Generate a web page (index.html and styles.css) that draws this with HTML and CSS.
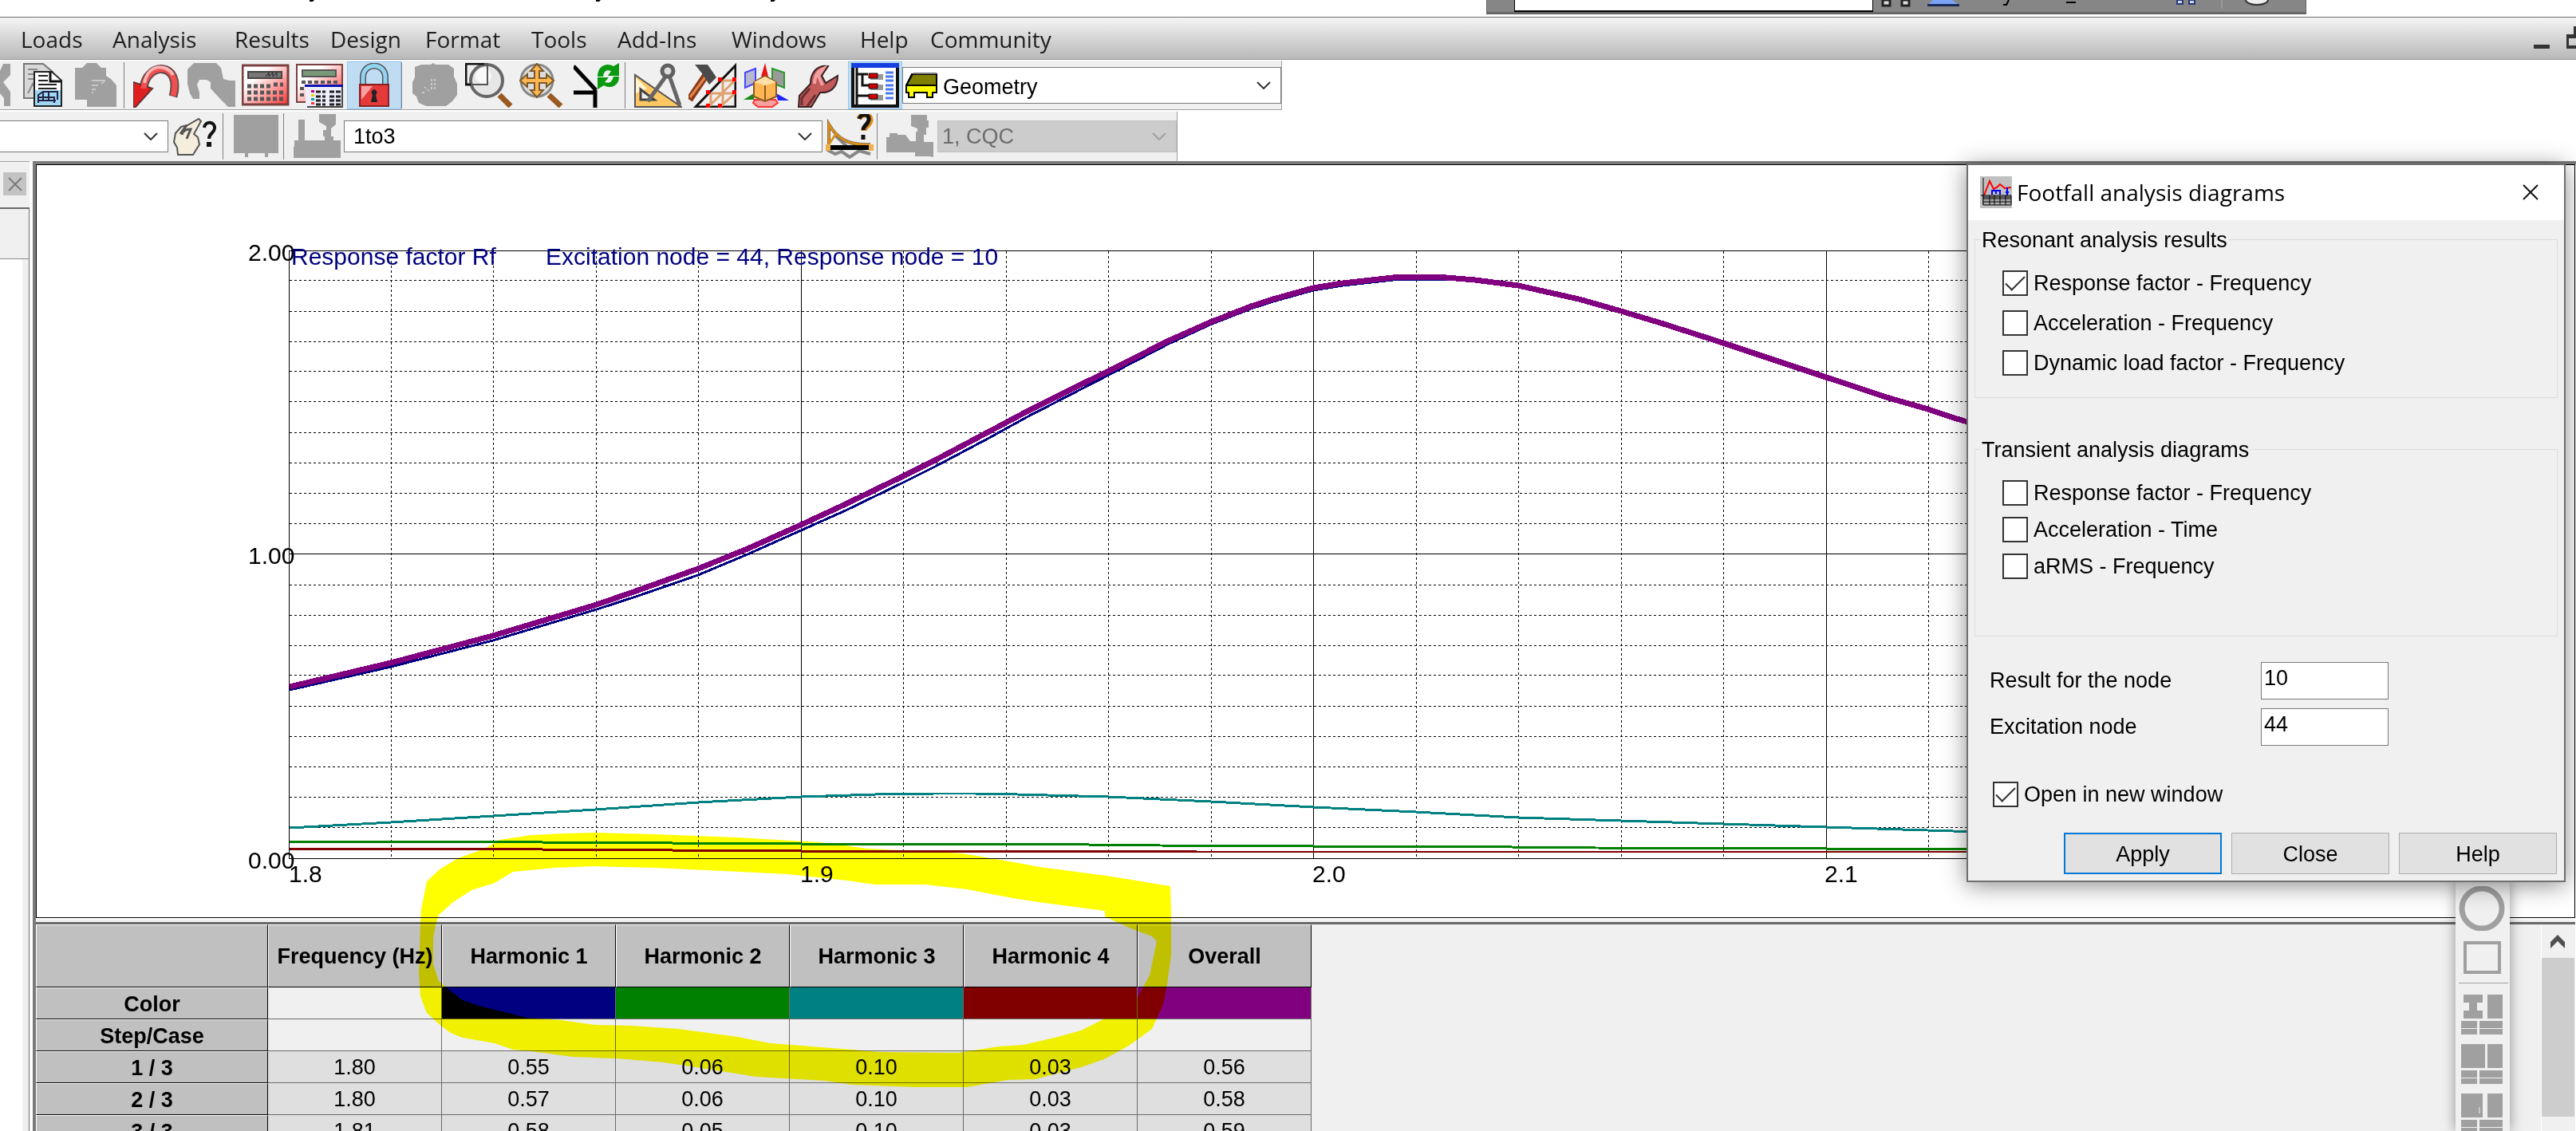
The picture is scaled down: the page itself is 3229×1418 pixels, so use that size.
FILE: index.html
```
<!DOCTYPE html>
<html lang="en">
<head>
    <meta charset="UTF-8">
    <meta name="viewport" content="width=device-width, initial-scale=1.0">
    <title>Footfall analysis diagrams</title>
    <link rel="stylesheet" href="styles.css">
</head>
<body>
    <header class="caption">
        <svg class="caption-marks" width="600" height="4" viewBox="0 0 600 4" aria-hidden="true">
            <path d="M10 0h6l-2 2h-4zM369 0h6l-2 2h-4zM588 0h6l-2 2h-4z"/>
        </svg>
        <div class="search-bar">
            <input class="search-box" type="text" aria-label="Search">
            <svg width="530" height="16" viewBox="0 0 530 16" aria-hidden="true">
                <path d="M12 0v6h12V0M38 0v6h10V0" fill="none"/>
                <path d="M12 0h9v7h-9zM36 0h9v7h-9z" fill="#ddd" stroke="#222" stroke-width="3"/>
                <path d="M75 0h24l9 6H68z" fill="#7aa3f5"/>
                <path d="M68 5h40v3H68z" fill="#1a2a55"/>
                <path d="M170 0l-3 6h-4" fill="none" stroke="#000" stroke-width="2"/>
                <path d="M242 3h12" stroke="#000" stroke-width="2"/>
                <path d="M381 0h7v5h-7zM396 0h7v5h-7z" fill="#cdd6f0" stroke="#2a3a70" stroke-width="2"/>
                <path d="M437 0v11" stroke="#aaa"/>
                <ellipse cx="481" cy="0" rx="14" ry="6" fill="#eee" stroke="#333" stroke-width="2"/>
            </svg>
        </div>
    </header>

    <nav class="menubar">
        <ul class="menu-list">
            <li><a href="#">Loads</a></li>
            <li><a href="#">Analysis</a></li>
            <li><a href="#">Results</a></li>
            <li><a href="#">Design</a></li>
            <li><a href="#">Format</a></li>
            <li><a href="#">Tools</a></li>
            <li><a href="#">Add-Ins</a></li>
            <li><a href="#">Windows</a></li>
            <li><a href="#">Help</a></li>
            <li><a href="#">Community</a></li>
        </ul>
        <div class="window-controls">
            <button type="button" aria-label="Minimize"><svg width="20" height="30" viewBox="0 0 20 30"><path d="M0 23h20v5H0z" fill="#333"/></svg></button>
            <button type="button" aria-label="Restore"><svg width="12" height="30" viewBox="0 0 12 30"><path d="M9 0h3v12H9zM0 10h12v5H3v9h9v4H0z" fill="#333"/></svg></button>
        </div>
    </nav>

    <!-- Main toolbar -->
    <div class="toolbar toolbar-main">
        <button class="tool tool-cut" type="button" aria-label="Cut">
            <svg viewBox="0 0 18 56"><path d="M13 1v14L4 24l9 12v18H5V44L0 38V10L4 1z" fill="#a0a0a0"/></svg>
        </button>
        <button class="tool" type="button" aria-label="Copy">
            <svg viewBox="0 0 60 56">
                <path d="M7 1h24l12 10v33H7z" fill="#d8d8d8" stroke="#777" stroke-width="2"/>
                <path d="M12 8h12M12 14h8M12 20h8M12 38l6-12 4 8" stroke="#8a8a8a" stroke-width="2" fill="none"/>
                <path d="M20 11h22l12 11v32H20z" fill="#fff" stroke="#222" stroke-width="2"/>
                <path d="M21 34h32v19H21z" fill="#9fd8f5"/>
                <path d="M40 11v12h14" fill="#fff" stroke="#111" stroke-width="3"/>
                <path d="M25 16h12M25 22h12M25 27h23M25 32h23" stroke="#222" stroke-width="2"/>
                <path d="M25 50V40l6-4h18v10M25 43h20v7M31 37v11M38 37v11M25 47h22" fill="none" stroke="#224" stroke-width="2"/>
            </svg>
        </button>
        <button class="tool" type="button" aria-label="Paste">
            <svg viewBox="0 0 60 56">
                <path d="M3 6h9l6-6h12l6 6h6v10l6 4 7 8v27H18v-9H3z" fill="#a0a0a0"/>
                <path d="M24 22h17M24 28h8M24 33h5M24 37h2M36 26l4-3" stroke="#eee" stroke-width="1"/>
            </svg>
        </button>
        <span class="separator"></span>
        <button class="tool" type="button" aria-label="Undo">
            <svg viewBox="0 0 60 56">
                <path d="M13 32C16-2 62-2 50 42" fill="none" stroke="#6b4a4a" stroke-width="11"/>
                <path d="M0 24l24 8L3 55H0z" fill="#e02020" stroke="#633" stroke-width="2"/>
                <path d="M13 32C16-2 62-2 50 41" fill="none" stroke="#f05050" stroke-width="7"/>
                <path d="M14 25C19 0 42 1 50 15" fill="none" stroke="#ffb3b3" stroke-width="4"/>
            </svg>
        </button>
        <button class="tool" type="button" aria-label="Redo">
            <svg viewBox="0 0 60 56">
                <path d="M8 0h28l6 6 3 14 8 2h7v33h-9L41 45 29 32V24l-5-3h-9l-3 6 3 10v8H7L3 38 0 26V8z" fill="#a0a0a0"/>
            </svg>
        </button>
        <button class="tool" type="button" aria-label="Calculate">
            <svg viewBox="0 0 60 56">
                <defs>
                    <linearGradient id="calc-red" x1="0" y1="0" x2="1" y2="1">
                        <stop offset="0.3" stop-color="#fff"/>
                        <stop offset="1" stop-color="#f33"/>
                    </linearGradient>
                </defs>
                <path d="M1 3h57v49H1z" fill="url(#calc-red)" stroke="#7a4040" stroke-width="3"/>
                <path d="M8 11h42v8H8z" fill="#777" stroke="#444" stroke-width="2"/>
                <path d="M30 17l4-5v5l5-5v5l5-5v5" stroke="#222" fill="none"/>
                <path d="M7 29h30M40 27h12M7 37h45M7 45h45" stroke="#555" stroke-width="5" stroke-dasharray="5 3"/>
            </svg>
        </button>
        <button class="tool" type="button" aria-label="Calculation report">
            <svg viewBox="0 0 60 56">
                <path d="M1 2h57v47H1z" fill="url(#calc-red)" stroke="#7a4040" stroke-width="2"/>
                <path d="M8 9h42v8H8z" fill="#799a79" stroke="#555" stroke-width="2"/>
                <path d="M7 24h45M5 32h6M5 40h6" stroke="#555" stroke-width="4" stroke-dasharray="5 3"/>
                <path d="M12 27h47v28H12z" fill="#eef"/>
                <path d="M11 27h48v3H11z" fill="#0a10b0"/>
                <path d="M25 36h12M25 42h12M25 47h12M25 52h12M42 36h16M42 42h16M42 47h16M42 52h16" stroke="#222" stroke-width="3" stroke-dasharray="6 2"/>
                <path d="M19 34h4v3h-4z" fill="#d0006f"/><path d="M19 39h4v3h-4z" fill="#dd0"/>
                <path d="M19 44h4v3h-4z" fill="#0aa"/><path d="M19 49h4v3h-4z" fill="#f33"/>
                <path d="M58 30v25H14" fill="none" stroke="#444" stroke-width="2"/>
            </svg>
        </button>
        <button class="tool tool-active" type="button" aria-label="Lock results">
            <svg viewBox="0 0 60 56">
                <path d="M16 28V17C17-1 43-1 44 17v11" fill="none" stroke="#555" stroke-width="8"/>
                <path d="M16 28V17C17-1 43-1 44 17v11" fill="none" stroke="#8fd4f2" stroke-width="5"/>
                <path d="M12 27h36v27H12z" fill="#e63a3a" stroke="#822" stroke-width="2"/>
                <path d="M14 29h14L14 46z" fill="#f9a0a0"/>
                <path d="M30 33a4 4 0 0 1 2 7l2 9h-8l2-9a4 4 0 0 1 2-7z" fill="#222"/>
            </svg>
        </button>
        <span class="separator"></span>
        <button class="tool" type="button" aria-label="Redraw">
            <svg viewBox="0 0 60 56">
                <path d="M5 5l8-3h12l3-2 3 2h16l7 5v10l4 9v14l-6 8-8 6H19l-9-4-3-8-5-4V24l3-6z" fill="#a0a0a0"/>
                <path d="M17 30l6 5M26 20v14M30 20v14M14 37h3" stroke="#eee" stroke-dasharray="3 2"/>
            </svg>
        </button>
        <button class="tool" type="button" aria-label="Zoom window">
            <svg viewBox="0 0 60 56">
                <path d="M43 40l14 14" stroke="#9a5b22" stroke-width="7"/>
                <circle cx="27" cy="22" r="20" fill="#e6e6e6" stroke="#666" stroke-width="4"/>
                <circle cx="23" cy="16" r="10" fill="#f8f8f8"/>
                <path d="M1 1h27v26H1z" fill="none" stroke="#555" stroke-width="2"/>
                <path d="M24 1H1v26h6" fill="none" stroke="#111" stroke-width="3"/>
            </svg>
        </button>
        <button class="tool" type="button" aria-label="Zoom all">
            <svg viewBox="0 0 60 56">
                <path d="M37 40l15 14" stroke="#9a5b22" stroke-width="7"/>
                <circle cx="22" cy="22" r="20" fill="#ddd" stroke="#888" stroke-width="3"/>
                <path d="M22 1l8 9h-5v9h9v-5l9 8-9 8v-5h-9v9h5l-8 9-8-9h5v-9h-9v5l-9-8 9-8v5h9v-9h-5z" fill="#ffb550" stroke="#7a5a2a" stroke-width="2"/>
            </svg>
        </button>
        <button class="tool" type="button" aria-label="Initial view">
            <svg viewBox="0 0 60 56">
                <path d="M0 4l28 30M0 37h28M27 34v22" stroke="#000" stroke-width="5" fill="none"/>
                <path d="M30 17c0-14 12-18 20-13l7-4v16H43l4-6c-6-2-9 0-10 7z" fill="#0a9a10"/>
                <path d="M57 17c0 12-11 16-19 11l-8 5V18h14l-5 6c6 2 9 0 11-7z" fill="#0a9a10"/>
            </svg>
        </button>
        <span class="separator"></span>
        <button class="tool" type="button" aria-label="Display attributes">
            <svg viewBox="0 0 60 56">
                <path d="M1 15v40h58z" fill="#ffc763" stroke="#555" stroke-width="2"/>
                <path d="M2 18v20l14-6z" fill="#fff3d0"/>
                <path d="M8 33v13h17z" fill="#eee" stroke="#444" stroke-width="3"/>
                <path d="M40 16L17 48M44 16l13 37" stroke="#666" stroke-width="5"/>
                <circle cx="42" cy="10" r="7" fill="#ddd" stroke="#606060" stroke-width="5"/>
            </svg>
        </button>
        <button class="tool" type="button" aria-label="Job preferences">
            <svg viewBox="0 0 60 56">
                <path d="M22 15L1 46" stroke="#8a3a16" stroke-width="9"/>
                <path d="M23 15L2 43" stroke="#e48650" stroke-width="3"/>
                <path d="M8 2h16l11 16-9 9-9-14z" fill="#4a4a4a"/>
                <path d="M59 3v52H9z" fill="none" stroke="#111" stroke-width="3"/>
                <path d="M28 38v16M43 22v32M28 38h30M43 22h15L26 54M41 54l17-16" fill="none" stroke="#e0a070" stroke-width="3"/>
                <path d="M37 18h5v5h-5zM55 18h5v5h-5zM22 34h5v5h-5zM55 34h5v5h-5zM22 51h5v5h-5zM37 51h5v5h-5z" fill="#f00"/>
            </svg>
        </button>
        <button class="tool" type="button" aria-label="Cube view">
            <svg viewBox="0 0 60 56">
                <path d="M3 12l13-5v18L3 31z" fill="#b8b8d0" stroke="#44f" stroke-width="2"/>
                <path d="M37 7l15 5v19l-15-6z" fill="#9a9a9a" stroke="#2a9a2a" stroke-width="2"/>
                <path d="M28 0l4 17h-9z" fill="#e11"/>
                <path d="M15 46h26l3 4-7 5H19l-6-5z" fill="#f6a0a0" stroke="#f33" stroke-width="2"/>
                <path d="M1 46l13-8v8z" fill="#1a8a1a"/><path d="M42 38l16 9H44z" fill="#22f"/>
                <path d="M14 24l14-8 14 8v18l-14 6-14-6z" fill="#ffb653" stroke="#8a5a20" stroke-width="2"/>
                <path d="M14 24l14 4 14-4-14-7z" fill="#ffe0a8"/>
                <path d="M28 28v20" stroke="#8a5a20" stroke-width="2"/>
            </svg>
        </button>
        <button class="tool" type="button" aria-label="Tools">
            <svg viewBox="0 0 60 56">
                <path d="M2 55l1-14 14-15C17 12 25 2 39 4l-8 12 5 9 15-9C51 32 40 38 29 37L18 55z" fill="#c25a5a" stroke="#3a2222" stroke-width="2"/>
                <path d="M22 26c0-10 4-16 11-19l-6 9 5 12" fill="none" stroke="#f0a0a0" stroke-width="4"/>
                <path d="M6 53V44l10-12M13 54l10-14" fill="none" stroke="#6a3030" stroke-width="3"/>
            </svg>
        </button>
        <button class="tool tool-active" type="button" aria-label="Object inspector">
            <svg viewBox="0 0 60 56">
                <path d="M2 2h56v52H2z" fill="#fff" stroke="#111" stroke-width="4"/>
                <path d="M0 0h60v6H0z" fill="#1440e0"/>
                <path d="M7 6v48M7 14h14M14 14v14h8M7 41h15" fill="none" stroke="#111" stroke-width="3"/>
                <path d="M24 14h16v7H24zM24 27h16v7H24zM24 40h16v7H24z" fill="#999"/>
                <path d="M22 13h11v6H22zM22 26h11v6H22zM22 39h11v6H22z" fill="#c00" stroke="#111" stroke-width="1"/>
                <path d="M43 12h10M43 17h10M43 22h10M43 28h10M43 33h10M43 38h10M43 44h10" stroke="#4a78f0" stroke-width="3"/>
            </svg>
        </button>
        <div class="combo combo-layout">
            <svg class="combo-icon" width="40" height="32" viewBox="0 0 40 32" aria-hidden="true">
                <path d="M8 2L1 16v9h3v6h7v-6h16v6h7v-6h5V2z" fill="#ff0" stroke="#000" stroke-width="2"/>
                <path d="M9 2h30v14H1z" fill="#808000" stroke="#000" stroke-width="2"/>
                <path d="M10 1h29" stroke="#777" stroke-width="2"/>
            </svg>
            <select aria-label="Layout"><option>Geometry</option></select>
            <svg class="chevron" width="18" height="10" viewBox="0 0 18 10"><path d="M1 1l8 8 8-8"/></svg>
        </div>
    </div>

    <!-- Selection toolbar -->
    <div class="toolbar toolbar-selection">
        <div class="combo combo-small">
            <select aria-label="Selection"><option></option></select>
            <svg class="chevron" width="18" height="10" viewBox="0 0 18 10"><path d="M1 1l8 8 8-8"/></svg>
        </div>
        <button class="tool" type="button" aria-label="Select objects">
            <svg viewBox="0 0 60 56">
                <path d="M8 51L7 42 3 35l2-11 7-8 8-2L34 6l3 3-9 16 5 4 2 9-8 13z" fill="#f6eedc" stroke="#555" stroke-width="2"/>
                <path d="M13 26c1-6 6-7 11-7l-5 12M19 14l-8 11" fill="none" stroke="#555" stroke-width="3"/>
                <path d="M41 17c1-9 14-8 13 1-1 7-7 6-7 13" fill="none" stroke="#111" stroke-width="4"/>
                <path d="M44 35h6v6h-6z" fill="#111"/>
            </svg>
        </button>
        <span class="separator"></span>
        <button class="tool" type="button" aria-label="Table">
            <svg viewBox="0 0 60 56"><path d="M2 1h56v48H45v5h-4v-5H20v5h-4v-5H2z" fill="#a0a0a0"/></svg>
        </button>
        <span class="separator"></span>
        <button class="tool" type="button" aria-label="Load case">
            <svg viewBox="0 0 60 56"><path d="M7 7h8v26h25V28h-2v-8h4v-5l-9-5V0h21v13l-6 5v10h3v5h9v22H1V41h1v-8h5z" fill="#a0a0a0"/></svg>
        </button>
        <div class="combo combo-case">
            <select aria-label="Case"><option>1to3</option></select>
            <svg class="chevron" width="18" height="10" viewBox="0 0 18 10"><path d="M1 1l8 8 8-8"/></svg>
        </div>
        <button class="tool" type="button" aria-label="Mode shape">
            <svg viewBox="0 0 60 56">
                <path d="M2 45l10 5 8-3 10 7 12-8 14 4M12 27l14 13" fill="none" stroke="#888" stroke-width="4"/>
                <path d="M4 42V13c10 17 24 27 52 25" fill="none" stroke="#555" stroke-width="4"/>
                <path d="M4 42V13c10 17 24 27 52 25M4 38l10-15" fill="none" stroke="#d98f1c" stroke-width="3"/>
                <path d="M6 39h48v6H6z" fill="#000"/>
                <path d="M0 38h6v8H0zM54 38h6v8h-6z" fill="#f0b050"/>
                <path d="M42 6c2-7 15-7 14 2-1 7-8 7-8 13" fill="none" stroke="#d98f1c" stroke-width="7"/>
                <path d="M42 6c2-7 13-7 12 1-1 7-7 7-7 13M47 26v6" fill="none" stroke="#111" stroke-width="5"/>
            </svg>
        </button>
        <span class="separator"></span>
        <button class="tool" type="button" aria-label="Mode">
            <svg viewBox="0 0 60 56"><path d="M31 1h20v7h2v9h-3v9h-3v9h12v19l-5-1H36v-5H0V29h4v-5h10v2h10l6 8h7V22h2V18l-8-3z" fill="#a0a0a0"/></svg>
        </button>
        <div class="combo combo-mode">
            <select aria-label="Mode combination" disabled><option>1, CQC</option></select>
            <svg class="chevron" width="18" height="10" viewBox="0 0 18 10"><path d="M1 1l8 8 8-8"/></svg>
        </div>
    </div>

    <main class="workspace">
        <aside class="dock">
            <div class="dock-head">
                <button class="dock-close" type="button" aria-label="Close panel">
                    <svg width="18" height="18" viewBox="0 0 18 18"><path d="M1 1l16 16M17 1L1 17" stroke="#7a7a7a" stroke-width="2"/></svg>
                </button>
            </div>
            <div class="dock-tab"></div>
            <div class="dock-body"></div>
        </aside>

        <section class="view">
            <div class="chart">
                <svg viewBox="46 207 3181 943" role="img" aria-label="Response factor against frequency">
                    <g class="grid-minor">
                        <path d="M490.5 315V1076M618.5 315V1076M747.5 315V1076M875.5 315V1076M1132.5 315V1076M1261.5 315V1076M1389.5 315V1076M1518.5 315V1076M1775.5 315V1076M1903.5 315V1076M2032.5 315V1076M2160.5 315V1076M2417.5 315V1076M2546.5 315V1076M2674.5 315V1076M2803.5 315V1076" stroke-dasharray="3 3"/>
                        <path d="M363 351.5H2931M363 390.5H2931M363 428.5H2931M363 465.5H2931M363 503.5H2931M363 542.5H2931M363 580.5H2931M363 618.5H2931M363 656.5H2931M363 733.5H2931M363 771.5H2931M363 809.5H2931M363 846.5H2931M363 885.5H2931M363 923.5H2931M363 961.5H2931M363 999.5H2931M363 1037.5H2931" stroke-dasharray="3 3"/>
                    </g>
                    <path class="grid-major" d="M362.5 314V1077M1004.5 314V1077M1646.5 314V1077M2289.5 314V1077M2931.5 314V1077M362 314.5H2931M362 694.5H2931M362 1076.5H2931"/>
                    <g class="curves">
                        <polyline stroke="#000080" stroke-width="3" points="363,865 490,836 618,803 748,764 800,747 875,721 937,695 1004,665 1060,640 1132,605 1172,585 1240,549 1287,523 1355,488 1390,470 1465,431 1517,407 1568,387 1596,378 1646,364 1683,358 1746,351 1775,350 1801,350 1849,352 1903,358 1979,376 2032,391 2085,407 2160,431 2289,474 2371,501 2417,514 2446,524 2480,533"/>
                        <polyline stroke="#008000" stroke-width="3" points="363,1055 680,1056 1004,1058 1275,1058 1454,1060 1647,1061 1790,1061 2000,1063 2289,1064 2480,1065"/>
                        <polyline stroke="#008080" stroke-width="3" points="363,1038 490,1031 618,1023 746,1015 875,1006 1004,999 1097,996 1171,995 1223,995 1275,996 1390,999 1518,1005 1647,1012 1775,1018 1903,1025 2032,1029 2160,1033 2289,1037 2480,1043"/>
                        <polyline stroke="#800000" stroke-width="3" points="363,1064 680,1065 1004,1067 1450,1067 1500,1068 2480,1068"/>
                        <polyline stroke="#800080" stroke-width="7" points="363,861 490,831 618,797 748,758 800,740 875,713 937,688 1004,658 1060,632 1132,597 1172,577 1240,541 1287,516 1355,482 1390,465 1465,427 1517,404 1568,384 1596,375 1646,361 1683,355 1746,348 1775,347 1801,347 1849,351 1903,358 1979,375 2032,390 2085,406 2160,430 2289,473 2371,500 2417,513 2446,523 2480,533"/>
                    </g>
                    <g class="axis-labels">
                        <text x="311" y="327">2.00</text>
                        <text x="311" y="707">1.00</text>
                        <text x="311" y="1089">0.00</text>
                        <text x="362" y="1106">1.8</text>
                        <text x="1003" y="1106">1.9</text>
                        <text x="1645" y="1106">2.0</text>
                        <text x="2287" y="1106">2.1</text>
                        <text x="2930" y="1106">2.2</text>
                    </g>
                    <text class="chart-title" x="365" y="332">Response factor Rf</text>
                    <text class="chart-title" x="684" y="332">Excitation node = 44, Response node = 10</text>
                </svg>
            </div>
            <div class="splitter"></div>
            <div class="table-pane">
                <table class="results">
                    <thead>
                        <tr>
                            <th class="corner"></th>
                            <th>Frequency (Hz)</th>
                            <th>Harmonic 1</th>
                            <th>Harmonic 2</th>
                            <th>Harmonic 3</th>
                            <th>Harmonic 4</th>
                            <th>Overall</th>
                        </tr>
                    </thead>
                    <tbody>
                        <tr>
                            <th>Color</th>
                            <td class="blank"></td>
                            <td class="navy"></td>
                            <td class="green"></td>
                            <td class="teal"></td>
                            <td class="maroon"></td>
                            <td class="purple"></td>
                        </tr>
                        <tr>
                            <th>Step/Case</th>
                            <td class="blank"></td>
                            <td class="blank"></td>
                            <td class="blank"></td>
                            <td class="blank"></td>
                            <td class="blank"></td>
                            <td class="blank"></td>
                        </tr>
                        <tr><th>1 / 3</th><td>1.80</td><td>0.55</td><td>0.06</td><td>0.10</td><td>0.03</td><td>0.56</td></tr>
                        <tr><th>2 / 3</th><td>1.80</td><td>0.57</td><td>0.06</td><td>0.10</td><td>0.03</td><td>0.58</td></tr>
                        <tr><th>3 / 3</th><td>1.81</td><td>0.58</td><td>0.05</td><td>0.10</td><td>0.03</td><td>0.59</td></tr>
                    </tbody>
                </table>
                <div class="scrollbar">
                    <button type="button" aria-label="Scroll up">
                        <svg width="18" height="17" viewBox="0 0 18 17"><path d="M9 0l9 9v8L9 8l-9 9V9z" fill="#505050"/></svg>
                    </button>
                    <div class="scroll-thumb"></div>
                </div>
            </div>
        </section>

        <!-- Section shape palette -->
        <div class="palette">
            <button type="button" aria-label="Circle"><svg width="58" height="56" viewBox="0 0 58 56"><ellipse cx="29" cy="28" rx="25" ry="25" fill="none" stroke="#a0a0a0" stroke-width="7"/></svg></button>
            <button type="button" aria-label="Rectangle"><svg width="58" height="56" viewBox="0 0 58 56"><path d="M8 9h43v37H8z" fill="none" stroke="#a0a0a0" stroke-width="4"/></svg></button>
            <hr>
            <button type="button" aria-label="Layout 1"><svg width="58" height="56" viewBox="0 0 58 56"><path d="M6 3h24v10h-7v10h7v10H6V23h7V13H6zM36 3h19v30H36zM3 36h20v9H3zM26 36h29v9H26zM3 46h20v7H3zM26 46h29v7H26z" fill="#a0a0a0"/></svg></button>
            <button type="button" aria-label="Layout 2"><svg width="58" height="56" viewBox="0 0 58 56"><path d="M3 3h30v30H3zM36 3h19v30H36zM3 36h20v9H3zM26 36h29v9H26zM3 46h20v7H3zM26 46h29v7H26z" fill="#a0a0a0"/></svg></button>
            <button type="button" aria-label="Layout 3"><svg width="58" height="56" viewBox="0 0 58 56"><path d="M3 3h27v30H3zM36 3h19v30H36zM3 36h20v9H3zM26 36h29v9H26zM3 46h20v7H3zM26 46h29v7H26z" fill="#a0a0a0"/><path d="M26 20v8" stroke="#eee"/></svg></button>
        </div>

        <!-- Highlighter mark round the harmonics -->
        <svg class="highlighter" viewBox="520 1040 952 330" aria-hidden="true">
            <path fill-rule="evenodd" d="M528 1140L535 1105 551 1090 574 1076 608 1064 626 1053 666 1047 706 1045 746 1044 821 1046 925 1050 1028 1056 1088 1064 1171 1068 1206 1070 1260 1079 1303 1087 1387 1098 1467 1111 1468 1143V1198L1463 1234 1458 1259 1444 1290 1415 1311 1384 1328 1355 1338 1298 1353 1263 1354 1212 1363H1148L1068 1360 1034 1355 948 1350 879 1339 832 1332 772 1327 718 1325 666 1318 643 1316 620 1308 580 1301 565 1295 554 1287 535 1270 527 1249 525 1220 527 1158Z
                M550 1147L546 1160 543 1176V1209L550 1230 565 1243 580 1254 600 1261 637 1270 660 1276 703 1279 746 1285 792 1286 850 1290 925 1300 965 1308 1068 1316 1103 1319 1200 1320 1252 1312 1283 1310 1326 1300 1355 1292 1381 1279 1426 1250 1441 1223 1450 1180 1444 1174 1415 1163 1385 1149V1142L1309 1132 1275 1127 1212 1115 1160 1109 1097 1109 1062 1104 988 1096 907 1092 821 1088 746 1086 695 1088 643 1093 620 1107 591 1116 568 1131Z"/>
        </svg>

        <form class="dialog" role="dialog" aria-labelledby="dialog-title">
            <div class="dialog-bar">
                <svg width="40" height="40" viewBox="0 0 40 40" aria-hidden="true">
                    <path d="M0 0h40v40H0z" fill="#c0c0c0"/>
                    <path d="M5 24l7-18 5 10 4-2 4-4 6 5 8-1" fill="none" stroke="#f00" stroke-width="2"/>
                    <path d="M15 23v-5h10v5M20 18v4M34 14v10M32 20h4" fill="none" stroke="#00f" stroke-width="2"/>
                    <path d="M4 2v34M1 24h4" stroke="#000" fill="none"/>
                    <path d="M4 24h35v12H4z" fill="#aaa" stroke="#000"/>
                    <path d="M4 26h35M4 28h35M4 32h35M12 24v12M18 24v12M25 24v12M32 24v12" stroke="#000"/>
                </svg>
                <h1 id="dialog-title">Footfall analysis diagrams</h1>
                <button class="dialog-close" type="button" aria-label="Close dialog">
                    <svg width="20" height="20" viewBox="0 0 20 20"><path d="M1 1l18 18M19 1L1 19" stroke="#111" stroke-width="2"/></svg>
                </button>
            </div>
            <fieldset class="group group-resonant">
                <legend>Resonant analysis results</legend>
                <label class="check"><input type="checkbox" checked>Response factor - Frequency</label>
                <label class="check"><input type="checkbox">Acceleration - Frequency</label>
                <label class="check"><input type="checkbox">Dynamic load factor - Frequency</label>
            </fieldset>
            <fieldset class="group group-transient">
                <legend>Transient analysis diagrams</legend>
                <label class="check"><input type="checkbox">Response factor - Frequency</label>
                <label class="check"><input type="checkbox">Acceleration - Time</label>
                <label class="check"><input type="checkbox">aRMS - Frequency</label>
            </fieldset>
            <div class="fields">
                <label for="result-node">Result for the node</label>
                <input id="result-node" type="text" value="10">
                <label for="excitation-node">Excitation node</label>
                <input id="excitation-node" type="text" value="44">
            </div>
            <label class="check check-window"><input type="checkbox" checked>Open in new window</label>
            <div class="dialog-actions">
                <button class="btn btn-default" type="button">Apply</button>
                <button class="btn" type="button">Close</button>
                <button class="btn" type="button">Help</button>
            </div>
        </form>
    </main>
</body>
</html>
```
FILE: styles.css
```
* {
    margin: 0;
    padding: 0;
    box-sizing: border-box;
}

body {
    display: flex;
    flex-direction: column;
    height: 100vh;
    overflow: hidden;
    background: #ffffff;
    color: #000000;
    font-family: "Liberation Sans", Arial, sans-serif;
    font-size: 27px;
}

button {
    border: none;
    background: none;
    font: inherit;
    color: inherit;
}

svg {
    display: block;
}

/* Caption strip */
.caption {
    display: flex;
    justify-content: space-between;
    align-items: flex-start;
    height: 21px;
    padding: 0 338px 0 378px;
}

.search-bar {
    display: flex;
    width: 1028px;
    height: 18px;
    padding-left: 34px;
    background: #868686;
    border: solid #666666;
    border-width: 0 1px 3px;
}

.search-box {
    width: 450px;
    height: 15px;
    background: #ffffff;
    border: solid #000000;
    border-width: 0 1px 2px;
}

/* Menu bar */
.menubar {
    display: flex;
    justify-content: space-between;
    height: 54px;
    margin-bottom: 1px;
    border-top: 1px solid #6e6e6e;
    border-bottom: 1px solid #9a9a9a;
    background: linear-gradient(#f4f4f4, #b8b8b8);
    font-family: "Open Sans", "Segoe UI", sans-serif;
    font-size: 28px;
    line-height: 54px;
}

.menu-list {
    display: grid;
    grid-template-columns: 115px 153px 120px 119px 133px 108px 143px 161px 88px auto;
    padding-left: 26px;
    list-style: none;
}

.menu-list a {
    color: #1e1e1e;
    text-decoration: none;
}

.window-controls {
    display: flex;
    align-items: center;
    gap: 21px;
}

/* Toolbars */
.toolbar {
    display: flex;
    align-items: center;
    width: fit-content;
    height: 62px;
    background: #f0f0f0;
    border-right: 1px solid #a0a0a0;
}

.toolbar-main {
    margin-bottom: 2px;
    border-bottom: 1px solid #a0a0a0;
}

.tool {
    display: flex;
    justify-content: center;
    align-items: center;
    width: 68px;
    height: 60px;
}

.tool svg {
    width: 60px;
    height: 56px;
}

.tool-cut {
    width: 19px;
    justify-content: flex-start;
}

.tool-cut svg {
    width: 18px;
}

.tool-active {
    background: #c0dcf3;
    border: 1px solid #90c8f6;
}

.separator {
    width: 8px;
    height: 58px;
    border-left: 1px solid #808080;
}

.combo {
    display: grid;
    grid-template-columns: auto 1fr auto;
    align-items: center;
    height: 40px;
    background: #ffffff;
    border: 1px solid #7a7a7a;
}

.combo select {
    grid-area: 1 / 1 / 2 / 4;
    width: 100%;
    height: 100%;
    padding-left: 11px;
    appearance: none;
    border: none;
    background: none;
    font: inherit;
    color: #000000;
}

.combo .chevron {
    grid-area: 1 / 3;
    margin-right: 12px;
    pointer-events: none;
    fill: none;
    stroke: #333333;
    stroke-width: 2;
}

.combo-small {
    width: 211px;
    border-left: none;
}

.combo-case {
    width: 600px;
}

.combo-mode {
    width: 300px;
    background: #cccccc;
    border-color: #bfbfbf;
}

.combo-mode select {
    padding-left: 5px;
    color: #6d6d6d;
    opacity: 1;
}

.combo-mode .chevron {
    stroke: #a0a0a0;
}

.combo-layout {
    width: 475px;
    height: 46px;
}

.combo-layout select {
    padding-left: 50px;
    padding-top: 4px;
}

.combo-icon {
    grid-area: 1 / 1;
    margin-left: 3px;
}

/* Workspace */
.workspace {
    position: relative;
    display: flex;
    flex: 1;
    min-height: 0;
}

.dock {
    display: flex;
    flex-direction: column;
    width: 41px;
    background: #ffffff;
}

.dock-head {
    display: flex;
    justify-content: flex-end;
    align-items: flex-start;
    height: 60px;
    margin-right: 4px;
    padding: 13px 4px 0 0;
    background: #f0f0f0;
    border-top: 1px solid #a0a0a0;
    border-bottom: 2px solid #696969;
}

.dock-close {
    display: flex;
    justify-content: center;
    align-items: center;
    width: 29px;
    height: 29px;
    background: #c3c3c3;
}

.dock-tab {
    height: 63px;
    margin-right: 4px;
    background: #f0f0f0;
    border-right: 1px solid #696969;
    border-bottom: 1px solid #8a8a8a;
}

.dock-body {
    flex: 1;
    margin-right: 4px;
    border-right: 1px solid #696969;
    box-shadow: inset -8px 0 #f0f0f0;
}

.view {
    display: flex;
    flex-direction: column;
    flex: 1;
    min-width: 0;
    padding-right: 1px;
    border-top: 4px solid #7b7b7b;
    border-left: 4px solid #7b7b7b;
}

.chart {
    border: 1px solid #000000;
    background: #ffffff;
}

.chart svg {
    width: 100%;
    height: auto;
}

.grid-minor path,
.grid-major {
    fill: none;
    stroke: #000000;
    stroke-width: 1;
    shape-rendering: crispEdges;
}

.curves polyline {
    fill: none;
    stroke-linejoin: round;
    shape-rendering: crispEdges;
}

.axis-labels,
.chart-title {
    font-size: 30px;
}

.chart-title {
    fill: #000080;
}

.splitter {
    height: 8px;
    background: #f0f0f0;
    border-top: 2px solid #ffffff;
    border-bottom: 3px solid #696969;
}

.table-pane {
    display: flex;
    justify-content: space-between;
    align-items: flex-start;
    flex: 1;
    min-height: 0;
    overflow: hidden;
    background: #f0f0f0;
}

.results {
    table-layout: fixed;
    width: 1599px;
    border-spacing: 0;
    text-align: center;
}

.results th {
    height: 40px;
    background: #c0c0c0;
    border: 1px solid;
    border-color: #ffffff #000000 #000000 #ffffff;
}

.results thead th {
    height: 79px;
    padding-top: 1px;
}

.results .corner {
    width: 291px;
}

.results td {
    height: 40px;
    background: #dfdfdf;
    border: solid #6b6b6b;
    border-width: 0 1px 1px 0;
}

.results tbody th,
.results tbody td {
    padding-top: 2px;
}

.results .blank {
    background: #f0f0f0;
}

.results .navy {
    background: #000080;
}

.results .green {
    background: #008000;
}

.results .teal {
    background: #008080;
}

.results .maroon {
    background: #800000;
}

.results .purple {
    background: #800080;
}

.scrollbar {
    align-self: stretch;
    width: 43px;
    border-left: 1px solid #ffffff;
}

.scrollbar button {
    display: flex;
    justify-content: center;
    align-items: center;
    width: 40px;
    height: 42px;
}

.scroll-thumb {
    width: 41px;
    height: 199px;
    background: #cdcdcd;
}

/* Floating palette */
.palette {
    position: absolute;
    top: 902px;
    right: 83px;
    bottom: 0;
    width: 68px;
    padding: 4px 0 0 4px;
    overflow: hidden;
    background: #f0f0f0;
    box-shadow: 0 0 16px rgba(0, 0, 0, 0.4);
}

.palette button {
    display: block;
    height: 62px;
}

.palette hr {
    margin: 0 2px 8px 0;
    border: none;
    border-top: 1px solid #a0a0a0;
}

.highlighter {
    position: absolute;
    top: 838px;
    left: 520px;
    width: 952px;
    fill: #ffff00;
    mix-blend-mode: multiply;
    pointer-events: none;
}

/* Dialog */
.dialog {
    position: absolute;
    top: 3px;
    right: 13px;
    width: 751px;
    padding-bottom: 8px;
    background: #f0f0f0;
    border: 2px solid #6f6f6f;
    box-shadow: 0 4px 28px rgba(0, 0, 0, 0.45);
}

.dialog-bar {
    display: flex;
    align-items: center;
    height: 69px;
    padding: 0 32px 2px 15px;
    background: #ffffff;
}

.dialog-bar h1 {
    flex: 1;
    margin-left: 6px;
    font-family: "Open Sans", "Segoe UI", sans-serif;
    font-size: 28px;
    font-weight: 400;
}

.group {
    margin: 0 8px;
    padding-left: 34px;
    border: 1px solid #dcdcdc;
}

.group legend {
    margin-left: -28px;
    padding: 2px 2px 0;
    line-height: 30px;
}

.group-resonant {
    height: 215px;
    margin-top: 8px;
    padding-top: 14px;
}

.group-transient {
    height: 251px;
    margin-top: 48px;
    padding-top: 16px;
}

.check {
    display: flex;
    align-items: center;
    gap: 7px;
    height: 50px;
}

.group-transient .check {
    height: 46px;
}

.check input {
    display: grid;
    place-items: center;
    width: 32px;
    height: 32px;
    appearance: none;
    background: #ffffff;
    border: 2px solid #333333;
}

.check input:checked::before {
    content: "";
    width: 22px;
    height: 10px;
    margin-bottom: 6px;
    border: solid #333333;
    border-width: 0 0 2px 2px;
    transform: rotate(-45deg);
}

.fields {
    display: grid;
    grid-template-columns: 340px 160px;
    align-items: center;
    gap: 11px 0;
    margin: 32px 0 0 27px;
}

.fields input {
    height: 47px;
    padding: 0 0 6px 3px;
    background: #ffffff;
    border: 1px solid #7a7a7a;
    font: inherit;
}

.check-window {
    margin: 36px 0 0 31px;
}

.dialog-actions {
    display: flex;
    justify-content: flex-end;
    gap: 12px;
    margin: 23px 9px 0 0;
}

.btn {
    width: 198px;
    height: 52px;
    padding-top: 2px;
    background: #e1e1e1;
    border: 1px solid #adadad;
}

.btn-default {
    border: 2px solid #0078d7;
}
```
